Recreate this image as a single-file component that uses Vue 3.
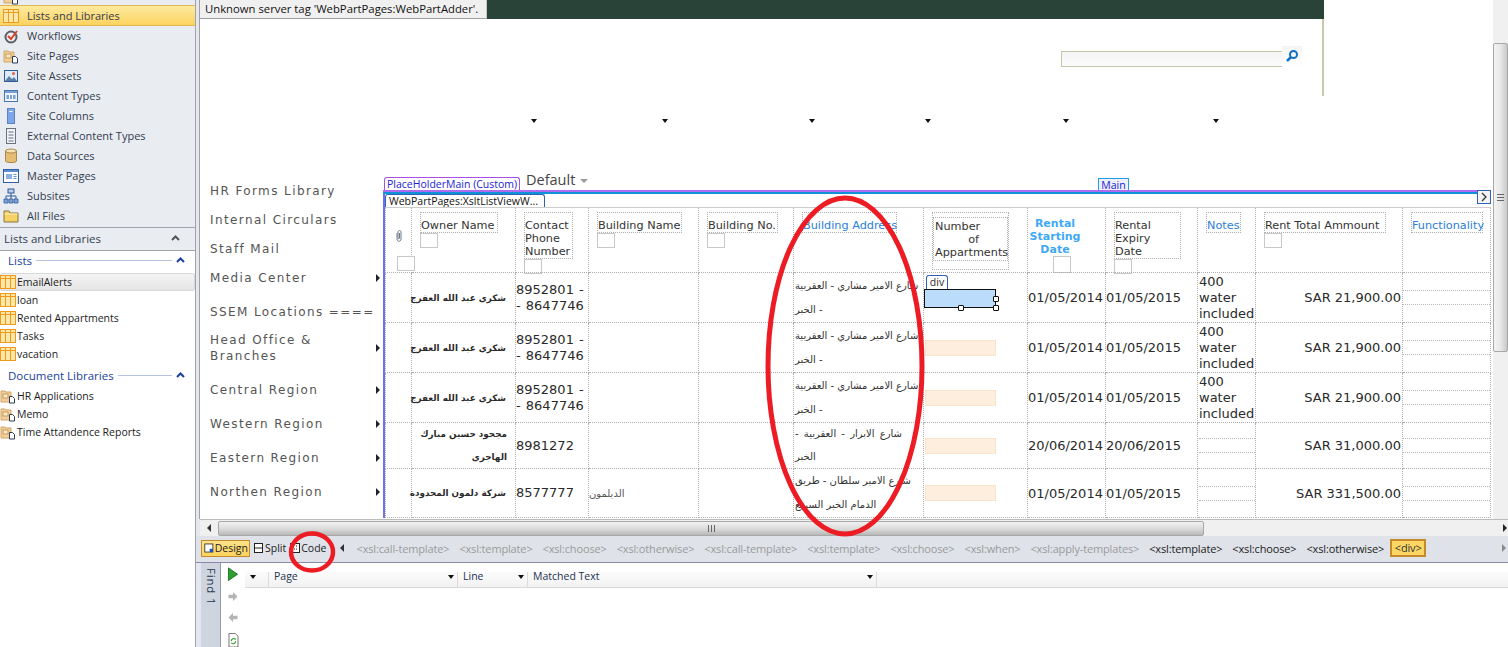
<template>
  <div class="app">
    <!-- icon sprite -->
    <svg class="sprite" width="0" height="0">
      <defs>
        <symbol id="ic-list" viewBox="0 0 16 16">
          <rect x="0.5" y="1.5" width="15" height="13" fill="#fde7a8" stroke="#ee9a1c" />
          <path d="M0.5 4.5h15M5.5 2v12M10.5 2v12" stroke="#ee9a1c" fill="none" />
        </symbol>
        <symbol id="ic-flow" viewBox="0 0 16 16">
          <circle cx="8" cy="9" r="5.5" fill="#eef0f2" stroke="#5a5f66" stroke-width="2" />
          <path d="M5 8l3 3 6-8" fill="none" stroke="#d8402a" stroke-width="2" />
        </symbol>
        <symbol id="ic-pages" viewBox="0 0 16 16">
          <path d="M1 3h4l1 1h5v10H1z" fill="#f1cf9a" stroke="#d2a566" />
          <rect x="3" y="6" width="5" height="4" fill="#fbeccd" stroke="#c99a58" />
          <path d="M9.500 8.500h3l2 2v4.500h-5z" fill="#fff" stroke="#2d3b55" />
        </symbol>
        <symbol id="ic-assets" viewBox="0 0 16 16">
          <rect x="1.500" y="2.500" width="13" height="11" fill="#dfeaf8" stroke="#2f5c99" />
          <path d="M2 13l4-5 3 3 2-2 3 4z" fill="#5c7fa8" />
          <circle cx="10.500" cy="5.500" r="1.500" fill="#e2603c" />
        </symbol>
        <symbol id="ic-ctype" viewBox="0 0 16 16">
          <rect x="1.500" y="2.500" width="13" height="11" fill="#eef4fb" stroke="#4a76ad" />
          <rect x="2" y="3" width="12" height="2" fill="#7aa0cf" />
          <path d="M3.500 7h9v4h-9z" fill="#7aa0cf" />
          <path d="M6.500 7v4M9.500 7v4" stroke="#fff" />
        </symbol>
        <symbol id="ic-column" viewBox="0 0 16 16">
          <rect x="4.500" y="0.500" width="7" height="15" fill="#7ea6ea" stroke="#5a83c8" />
          <path d="M6.500 3.500h3" stroke="#fff" />
        </symbol>
        <symbol id="ic-ext" viewBox="0 0 16 16">
          <rect x="3.500" y="0.500" width="9" height="15" fill="#f1f3f6" stroke="#68717f" />
          <path d="M5.500 4h5M5.500 7h5M5.500 10h5M5.500 13h5" stroke="#68717f" />
        </symbol>
        <symbol id="ic-data" viewBox="0 0 16 16">
          <path d="M2.500 3v10c0 2 11 2 11 0V3z" fill="#e6bd74" stroke="#a9874e" />
          <ellipse cx="8" cy="3" rx="5.500" ry="2" fill="#f5e1b6" stroke="#a9874e" />
        </symbol>
        <symbol id="ic-master" viewBox="0 0 16 16">
          <rect x="0.500" y="1.500" width="15" height="13" fill="#fff" stroke="#2f5fa8" />
          <rect x="1" y="2" width="14" height="2" fill="#5d8cd0" />
          <rect x="3" y="6" width="6" height="5" fill="#8eb0e0" />
          <path d="M10.500 6.500h3M10.500 8.500h3M10.500 10.500h3" stroke="#5d8cd0" />
        </symbol>
        <symbol id="ic-sub" viewBox="0 0 16 16">
          <rect x="5" y="1" width="6" height="4" fill="#b9cdea" stroke="#2f5c99" />
          <path d="M8 5v3M3 11V8h10v3M8 8v3" fill="none" stroke="#2f5c99" />
          <path d="M1 11h4v4H1zM6 11h4v4H6zM11 11h4v4h-4z" fill="#7ea6d8" stroke="#2f5c99" stroke-width="0.800" />
        </symbol>
        <symbol id="ic-folder" viewBox="0 0 16 16">
          <path d="M1 3h5l1 2h8v9H1z" fill="#f6d163" stroke="#8a7440" />
          <path d="M1.500 6h13" stroke="#fff3c4" />
        </symbol>
        <symbol id="ic-chev" viewBox="0 0 9 6">
          <path d="M1 5l3.500-3.500L8 5" fill="none" stroke="currentColor" stroke-width="2" />
        </symbol>
      </defs>
    </svg>

    <!-- left nav -->
    <aside class="sidebar">
      <div class="nav-cut"><svg class="ic cut"><use href="#ic-pages" /></svg></div>
      <div v-for="item in siteObjects" :key="item.label" :class="['nav-row', { on: item.on }]">
        <svg class="ic"><use :href="'#' + item.icon" /></svg>
        <span>{{ item.label }}</span>
      </div>
      <div class="panel-head">
        <span>Lists and Libraries</span>
        <svg class="chev grey"><use href="#ic-chev" /></svg>
      </div>
      <div class="panel-body">
        <div class="group-head">
          <span>Lists</span><i></i><svg class="chev"><use href="#ic-chev" /></svg>
        </div>
        <div v-for="(l, i) in lists" :key="l" :class="['lib-row', { hover: i === 0 }]">
          <svg class="ic"><use href="#ic-list" /></svg>
          <span>{{ l }}</span>
        </div>
        <div class="group-head second">
          <span>Document Libraries</span><i></i><svg class="chev"><use href="#ic-chev" /></svg>
        </div>
        <div v-for="l in libraries" :key="l" class="lib-row">
          <svg class="ic"><use href="#ic-pages" /></svg>
          <span>{{ l }}</span>
        </div>
      </div>
    </aside>

    <main class="main">
      <div class="canvas-row">
        <div class="design">
          <div class="top-bar">
            <div class="tag-error">Unknown server tag 'WebPartPages:WebPartAdder'.</div>
            <div class="green"></div>
            <div class="top-blank"></div>
          </div>

          <div class="head-wrap">
            <div class="head-area">
              <div class="search">
                <div class="search-input"></div>
                <div class="search-btn">
                  <svg width="14" height="14" viewBox="0 0 14 14">
                    <circle cx="8.500" cy="5.500" r="3.500" fill="none" stroke="#0f72c4" stroke-width="2" />
                    <path d="M6 8l-4 4" stroke="#0f72c4" stroke-width="2.500" />
                  </svg>
                </div>
              </div>
            </div>
          </div>

          <div class="arrows">
            <span v-for="w in arrowGaps" :key="w" class="arrow-slot" :style="{ width: w + 'px' }"><i class="tri"></i></span>
          </div>

          <div class="body-row">
            <ul class="page-nav">
              <li v-for="n in pageNav" :key="n.label" :class="n.cls">
                <span>{{ n.label }}</span>
                <i v-if="n.sub" class="tri-right"></i>
              </li>
            </ul>

            <div class="placeholder">
              <div class="ph-tabs">
                <span class="ph-tab">PlaceHolderMain (Custom)</span>
                <span class="ph-default">Default <i class="tri-grey"></i></span>
                <span class="main-tab">Main</span>
              </div>
              <div class="ph-lines">
                <button class="ph-more">
                  <svg width="8" height="10" viewBox="0 0 8 10"><path d="M2 1l4 4-4 4" fill="none" stroke="#333" stroke-width="1.300" /></svg>
                </button>
              </div>
              <div class="ph-inner">
                <div class="wp-tab">WebPartPages:XsltListViewW...</div>
                <table class="grid">
                  <colgroup>
                    <col v-for="w in colWidths" :key="w.k" :style="{ width: w.v + 'px' }" />
                  </colgroup>
                  <thead>
                    <tr>
                      <th class="clip-cell">
                        <svg width="8" height="12" viewBox="0 0 8 12"><path d="M2 3v6c0 3 4 3 4 0V2C6 0 3 0 3 2v6c0 1 1.500 1 1.500 0V3" fill="none" stroke="#6e7a88" /></svg>
                        <div class="fb clip-fb"></div>
                      </th>
                      <th><div class="lbl w78">Owner Name</div><div class="fb"></div></th>
                      <th><div class="lbl w49">Contact Phone Number</div><div class="fb"></div></th>
                      <th><div class="lbl w85">Building Name</div><div class="fb"></div></th>
                      <th><div class="lbl w71">Building No.</div><div class="fb"></div></th>
                      <th><div class="lbl blue w95">Building Address</div></th>
                      <th>
                        <div class="lbl outer">
                          <div class="appt">Number<span class="of">of</span>Appartments</div>
                        </div>
                      </th>
                      <th class="start">
                        <div class="start-lbl">Rental Starting Date</div>
                        <div class="fb start-fb"></div>
                      </th>
                      <th><div class="lbl w67">Rental<br />Expiry<br />Date</div><div class="fb"></div></th>
                      <th><div class="lbl blue w35">Notes</div></th>
                      <th><div class="lbl w122">Rent Total Ammount</div><div class="fb"></div></th>
                      <th><div class="lbl blue w72">Functionality</div></th>
                    </tr>
                  </thead>
                  <tbody>
                    <tr v-for="(r, i) in rows" :key="i" :class="'h' + r.h">
                      <td></td>
                      <td class="owner">{{ r.owner }}</td>
                      <td class="phone">{{ r.phone }}</td>
                      <td class="bname">{{ r.building }}</td>
                      <td></td>
                      <td class="addr">{{ r.address }}</td>
                      <td class="appt-cell">
                        <div v-if="i === 0" class="sel-wrap">
                          <span class="div-tag">div</span>
                          <div class="sel-box">
                            <i class="hd h1"></i><i class="hd h2"></i><i class="hd h3"></i>
                          </div>
                        </div>
                        <div v-else class="peach"></div>
                      </td>
                      <td class="num">{{ r.start }}</td>
                      <td class="num">{{ r.end }}</td>
                      <td class="notes">
                        <template v-if="r.notes">400 water included</template>
                        <div v-else class="dot-box"></div>
                      </td>
                      <td class="price">{{ r.price }}</td>
                      <td><div class="dot-box"></div></td>
                    </tr>
                  </tbody>
                </table>
              </div>
            </div>
          </div>
        </div>

        <div class="vscroll">
          <div class="vthumb"><span class="grip-h"></span></div>
        </div>
      </div>

      <div class="hscroll">
        <i class="tri-left"></i>
        <div class="hthumb"><span class="grip-v"></span></div>
        <i class="tri-right small"></i>
      </div>

      <div class="crumbs">
        <div class="view-btn active">
          <svg width="12" height="12" viewBox="0 0 12 12"><rect x="1" y="1" width="10" height="10" fill="#fff" stroke="#222" /><rect x="7" y="7" width="4" height="4" fill="#1b52c4" /></svg>
          Design
        </div>
        <div class="view-btn">
          <svg width="11" height="12" viewBox="0 0 11 12"><rect x="1.500" y="1.500" width="8" height="9" fill="#fff" stroke="#222" /><path d="M1.500 6h8" stroke="#222" /></svg>
          Split
        </div>
        <div class="view-btn code">
          <svg width="10" height="10" viewBox="0 0 10 10"><rect x="0.500" y="0.500" width="9" height="9" fill="#fff" stroke="#222" /><path d="M3 3h1M6 3h1M4 6h1M6 6h1" stroke="#222" /></svg>
          Code
        </div>
        <i class="tri-left dark"></i>
        <div class="tags">
          <span v-for="(t, i) in crumbs" :key="i" :class="['tag', t.cls]">{{ t.label }}</span>
        </div>
        <i class="tri-right small grey-tri"></i>
      </div>

      <div class="find-pane">
        <div class="find-tab"><span>Find 1</span></div>
        <div class="find-tools">
          <svg width="12" height="16" viewBox="0 0 12 16"><path d="M1 1l10 7-10 7z" fill="#2fa02f" stroke="#17701a" /></svg>
          <svg width="12" height="10" viewBox="0 0 12 10"><path d="M1 3h5V0l5 5-5 5V7H1z" fill="#b5b5b5" /></svg>
          <svg width="12" height="10" viewBox="0 0 12 10"><path d="M11 3H6V0L1 5l5 5V7h5z" fill="#b5b5b5" /></svg>
          <svg width="13" height="16" viewBox="0 0 13 16"><path d="M1.500 0.500h7l3 3v12h-10z" fill="#fff" stroke="#666" /><path d="M4 9a3 3 0 0 1 5-2M9 9a3 3 0 0 1-5 2" fill="none" stroke="#2fa02f" stroke-width="1.200" /></svg>
        </div>
        <div class="find-main">
          <div class="find-head">
            <div class="fh f0"><i class="tri"></i></div>
            <div class="fh f1">Page<i class="tri"></i></div>
            <div class="fh f2">Line<i class="tri"></i></div>
            <div class="fh f3">Matched Text<i class="tri"></i></div>
          </div>
        </div>
      </div>
    </main>

    <!-- red marks drawn over the screenshot -->
    <svg class="marks" width="1508" height="647" viewBox="0 0 1508 647">
      <ellipse cx="845" cy="366" rx="77" ry="168" fill="none" stroke="#ed1c24" stroke-width="5" />
      <ellipse cx="312" cy="552" rx="21" ry="18.500" fill="none" stroke="#ed1c24" stroke-width="4.500" />
    </svg>
  </div>
</template>

<script setup>
const siteObjects = [
  { label: 'Lists and Libraries', icon: 'ic-list', on: true },
  { label: 'Workflows', icon: 'ic-flow' },
  { label: 'Site Pages', icon: 'ic-pages' },
  { label: 'Site Assets', icon: 'ic-assets' },
  { label: 'Content Types', icon: 'ic-ctype' },
  { label: 'Site Columns', icon: 'ic-column' },
  { label: 'External Content Types', icon: 'ic-ext' },
  { label: 'Data Sources', icon: 'ic-data' },
  { label: 'Master Pages', icon: 'ic-master' },
  { label: 'Subsites', icon: 'ic-sub' },
  { label: 'All Files', icon: 'ic-folder' }
]

const lists = ['EmailAlerts', 'loan', 'Rented Appartments', 'Tasks', 'vacation']
const libraries = ['HR Applications', 'Memo', 'Time Attandence Reports']

const arrowGaps = [337, 131, 147, 116, 138, 150]

const pageNav = [
  { label: 'HR Forms Library', cls: 'short' },
  { label: 'Internal Circulars', cls: 'short' },
  { label: 'Staff Mail', cls: 'short' },
  { label: 'Media Center', cls: 'short', sub: true },
  { label: 'SSEM Locations ====', cls: 'ssem' },
  { label: 'Head Office & Branches', cls: 'head', sub: true },
  { label: 'Central Region', sub: true },
  { label: 'Western Region', sub: true },
  { label: 'Eastern Region', sub: true },
  { label: 'Northen Region', sub: true }
]

const colWidths = [26, 104, 73, 110, 95, 130, 104, 78, 92, 58, 147, 88].map((v, k) => ({ k, v }))

const ADDR_1 = 'شارع الامير مشاري - العقربية - الخبر'
const OWNER_1 = 'شكري عبد الله العفرج'

const rows = [
  { h: 50, owner: OWNER_1, phone: '8952801 - - 8647746', building: '', address: ADDR_1, start: '01/05/2014', end: '01/05/2015', notes: true, price: 'SAR 21,900.00' },
  { h: 50, owner: OWNER_1, phone: '8952801 - - 8647746', building: '', address: ADDR_1, start: '01/05/2014', end: '01/05/2015', notes: true, price: 'SAR 21,900.00' },
  { h: 50, owner: OWNER_1, phone: '8952801 - - 8647746', building: '', address: ADDR_1, start: '01/05/2014', end: '01/05/2015', notes: true, price: 'SAR 21,900.00' },
  { h: 46, owner: 'مجحود حسين مبارك الهاجري', phone: '8981272', building: '', address: 'شارع الابرار - العقربية - الخبر', start: '20/06/2014', end: '20/06/2015', notes: false, price: 'SAR 31,000.00' },
  { h: 48, owner: 'شركة دلمون المحدودة', phone: '8577777', building: 'الديلمون', address: 'شارع الامير سلطان - طريق الدمام الخبر السريع', start: '01/05/2014', end: '01/05/2015', notes: false, price: 'SAR 331,500.00' }
]

const crumbs = [
  { label: '<xsl:call-template>' },
  { label: '<xsl:template>' },
  { label: '<xsl:choose>' },
  { label: '<xsl:otherwise>' },
  { label: '<xsl:call-template>' },
  { label: '<xsl:template>' },
  { label: '<xsl:choose>' },
  { label: '<xsl:when>' },
  { label: '<xsl:apply-templates>' },
  { label: '<xsl:template>', cls: 'dark' },
  { label: '<xsl:choose>', cls: 'dark' },
  { label: '<xsl:otherwise>', cls: 'dark' },
  { label: '<div>', cls: 'cur' }
]
</script>

<style>
html, body { margin: 0; padding: 0; overflow: hidden; background: #fff; }
</style>

<style scoped>
.app {
  position: relative;
  display: flex;
  width: 1508px;
  height: 647px;
  overflow: hidden;
  font-family: "Open Sans", "Noto Sans", sans-serif;
  font-size: 11px;
  color: #222;
  background: #fff;
}
.sprite { position: absolute; }
.marks { position: absolute; left: 0; top: 0; pointer-events: none; }
.ic { width: 16px; height: 16px; flex: none; }

/* sidebar */
.sidebar {
  width: 195px;
  flex: none;
  display: flex;
  flex-direction: column;
  background: #e9edf2;
  border-right: 1px solid #a0a4aa;
  color: #333c4e;
}
.nav-cut { height: 6px; overflow: hidden; position: relative; border-bottom: 1px solid #e3b64c; box-sizing: border-box; }
.nav-cut .cut { position: absolute; left: 3px; top: -11px; }
.nav-row {
  height: 20px;
  display: flex;
  align-items: center;
  gap: 8px;
  padding: 0 0 1px 3px;
  box-sizing: border-box;
}
.nav-row.on {
  background: linear-gradient(#fdeaa0, #fdd35f);
  border-bottom: 1px solid #e3b64c;
  padding-bottom: 0;
}
.panel-head {
  margin-top: 1px;
  height: 24px;
  display: flex;
  align-items: center;
  justify-content: space-between;
  padding: 0 15px 2px 4px;
  box-sizing: border-box;
  border-top: 1px solid #a0a4aa;
  border-bottom: 1px solid #a0a4aa;
  font-size: 11.500px;
}
.panel-body { flex: 1; background: #fff; padding-top: 1px; }
.group-head {
  height: 21px;
  display: flex;
  align-items: center;
  gap: 4px;
  padding: 0 10px 5px 8px;
  box-sizing: border-box;
  color: #1b3f9c;
  font-size: 11.500px;
}
.group-head i { flex: 1; height: 1px; background: #b4c4e4; }
.group-head.second { height: 24px; padding: 2px 10px 2px 8px; }
.chev { width: 9px; height: 6px; flex: none; color: #1b3f9c; }
.chev.grey { color: #555; }
.lib-row {
  height: 18px;
  display: flex;
  align-items: center;
  gap: 1px;
  color: #1c1c1c;
  box-sizing: border-box;
  font-size: 10.500px;
}
.lib-row.hover {
  background: linear-gradient(#f5f5f5, #e4e4e4);
  border-radius: 3px;
  box-shadow: inset 0 0 0 1px #d8d8d8;
}

/* main */
.main { flex: 1; min-width: 0; display: flex; flex-direction: column; background: #e4e8ee; }
.canvas-row { height: 519px; display: flex; padding-left: 3px; box-sizing: border-box; flex: none; }
.design {
  flex: 1;
  min-width: 0;
  background: #fff;
  border-left: 1px solid #a0a0a0;
  display: flex;
  flex-direction: column;
}
.top-bar { height: 19px; display: flex; flex: none; }
.tag-error {
  width: 287px;
  background: #f0f0f0;
  border-bottom: 1px solid #a0a0a0;
  border-right: 1px solid #c8c8c8;
  box-sizing: border-box;
  padding-left: 5px;
  line-height: 17px;
  font-size: 11.300px;
  color: #111;
}
.green { width: 837px; background: #2a4339; }
.top-blank { flex: 1; }
.head-wrap { height: 77px; flex: none; }
.head-area {
  width: 1124px;
  height: 77px;
  border-right: 2px solid #c8c8ad;
  position: relative;
  display: flex;
  justify-content: flex-end;
  padding-top: 28px;
  box-sizing: border-box;
}
.search { display: flex; align-items: flex-end; height: 20px; margin-right: 20px; }
.search-input {
  width: 221px;
  height: 16px;
  box-sizing: border-box;
  border: 1px solid #c6c6a8;
  border-right: none;
  background: linear-gradient(#f4f4f4, #fbfbfb);
}
.search-btn {
  width: 20px;
  height: 21px;
  background: linear-gradient(#f4f4f4, #fff);
  display: flex;
  justify-content: center;
  padding-top: 3px;
  box-sizing: border-box;
}

.arrows { height: 80px; display: flex; flex: none; padding-top: 23px; box-sizing: border-box; }
.arrow-slot { display: flex; justify-content: flex-end; height: 6px; }

.tri { display: inline-block; width: 0; height: 0; border-left: 3.500px solid transparent; border-right: 3.500px solid transparent; border-top: 4px solid #111; }
.tri-right { display: inline-block; width: 0; height: 0; border-top: 4px solid transparent; border-bottom: 4px solid transparent; border-left: 4px solid #222; }
.tri-left { display: inline-block; width: 0; height: 0; border-top: 4px solid transparent; border-bottom: 4px solid transparent; border-right: 4px solid #333; }
.tri-grey { display: inline-block; width: 0; height: 0; border-left: 4px solid transparent; border-right: 4px solid transparent; border-top: 4px solid #999; vertical-align: middle; margin-left: 1px; }
.grey-tri { border-left-color: #888; }

.body-row { flex: 1; min-height: 0; display: flex; }
.page-nav {
  width: 183px;
  flex: none;
  margin: 0;
  padding: 0 0 0 10px;
  box-sizing: border-box;
  list-style: none;
  font-family: "DejaVu Sans", sans-serif;
  font-size: 12px;
  letter-spacing: 1.400px;
  line-height: 16px;
  color: #555;
}
.page-nav li { height: 34px; display: flex; align-items: center; justify-content: space-between; padding-right: 3px; box-sizing: border-box; }
.page-nav li.short { height: 29px; }
.page-nav li.ssem { height: 38px; padding-top: 1px; }
.page-nav li.head { height: 36px; margin-bottom: 7px; }
.page-nav li span { max-width: 168px; }
.page-nav li.ssem span { white-space: nowrap; }
.page-nav li.head span { max-width: 120px; }

.placeholder { flex: 1; min-width: 0; display: flex; flex-direction: column; margin-bottom: 1px; }
.ph-tabs { height: 14px; position: relative; display: flex; align-items: flex-end; padding-left: 1px; }
.ph-tab {
  height: 13px;
  box-sizing: border-box;
  border: 1px solid #a94fe8;
  border-bottom: none;
  border-radius: 3px 3px 0 0;
  padding: 0 2px;
  line-height: 12px;
  color: #2222d8;
  font-size: 10.500px;
  background: #fff;
  width: 136px;
  white-space: nowrap;
  overflow: hidden;
}
.ph-default { margin-left: 6px; font-size: 14.500px; color: #444; line-height: 14px; height: 16px; margin-bottom: 1px; }
.main-tab {
  position: absolute;
  left: 715px;
  top: 2px;
  height: 12px;
  width: 31px;
  box-sizing: border-box;
  border: 1px solid #1e9de8;
  border-bottom: none;
  text-align: center;
  line-height: 12px;
  font-size: 10.500px;
  color: #2222d8;
  background: #eef0fa;
}
.ph-lines {
  height: 0;
  width: 1094px;
  position: relative;
  border-top: 2px solid #b06cf0;
  border-bottom: 2px solid #0e92d8;
}
.ph-more {
  position: absolute;
  left: 1094px;
  top: -2px;
  width: 14px;
  height: 14px;
  padding: 0;
  background: #f3f3f5;
  border: 1px solid #2f62b8;
  display: flex;
  align-items: center;
  justify-content: center;
}
.ph-inner { flex: 1; min-height: 0; border-left: 2px solid #7070f0; position: relative; overflow: hidden; }
.wp-tab {
  width: 160px;
  height: 13px;
  box-sizing: border-box;
  border: 1px solid #2f62b8;
  border-bottom: none;
  border-radius: 3px 3px 0 0;
  line-height: 12px;
  padding-left: 3px;
  font-size: 10.500px;
  color: #111;
  white-space: nowrap;
  overflow: hidden;
}

/* list view table */
.grid {
  table-layout: fixed;
  border-collapse: collapse;
  width: 1105px;
  border-top: 1px dotted #3a6ec8;
  font-family: "DejaVu Sans", sans-serif;
  font-size: 13px;
  color: #2a2a2a;
}
.grid thead tr { height: 65px; border-top: 1px solid #ccc; }
.grid th {
  vertical-align: top;
  text-align: left;
  font-weight: normal;
  font-size: 11.250px;
  line-height: 13px;
  padding: 4px 8px 0;
  border: 1px dotted #b0b0b0;
  border-top: none;
  color: #333;
  overflow: visible;
}
.grid td {
  padding: 0;
  border: 1px dotted #b0b0b0;
  vertical-align: middle;
  overflow: visible;
}
.h50 { height: 50px; }
.h46 { height: 46px; }
.h48 { height: 48px; }
.lbl { border: 1px dotted #b0b0b0; padding: 6px 0 0; box-sizing: border-box; white-space: normal; }
.blue { color: #2a7ed6; white-space: nowrap; }
.w78 { width: 78px; white-space: nowrap; }
.w49 { width: 49px; }
.w85 { width: 85px; white-space: nowrap; }
.w71 { width: 71px; white-space: nowrap; }
.w95 { width: 95px; }
.w67 { width: 67px; }
.w35 { width: 35px; }
.w122 { width: 122px; white-space: nowrap; }
.w72 { width: 72px; }
.fb { width: 18px; height: 15px; margin-bottom: -4px; border: 1px solid #c8c8c8; box-sizing: border-box; background: #fff; }
.clip-cell { position: relative; padding: 0 !important; }
.clip-cell svg { position: absolute; left: 9px; top: 22px; }
.clip-fb { position: absolute; left: 11px; top: 48px; }
.outer { width: 77px; height: 58px; padding: 4px 0 0; }
.appt { border: 1px dotted #b0b0b0; padding: 2px 0 0 1px; height: 44px; box-sizing: border-box; }
.of { display: block; text-align: right; padding-right: 28px; height: 13px; }
.start { text-align: left !important; padding: 3px 0 0 !important; }
.start-lbl { font-weight: bold; color: #3fa9f5; font-size: 11px; width: 54px; margin: 6px 0 0; text-align: center; line-height: 13px; }
.start-fb { margin: 0 0 -4px 25px; height: 17px; }
.owner { direction: rtl; text-align: right; padding-right: 9px !important; font-size: 8.800px; font-weight: bold; line-height: 24px; white-space: nowrap; }
.h46 .owner { white-space: normal; padding-right: 8px !important; }
.phone { line-height: 16px; word-spacing: 1px; }
.bname { font-size: 10px; color: #555; }
.addr { font-size: 10px; line-height: 24px; color: #333; padding: 0 1px !important; }
.h46 .owner, .h46 .addr { line-height: 22.500px; }
.h46 .addr { padding-right: 14px !important; word-spacing: 2px; }
.appt-cell { position: relative; }
.peach { width: 71px; height: 16px; margin-left: 1px; background: #feeedd; border: 1px dotted #f3d8bb; box-sizing: border-box; }
.sel-wrap { position: relative; height: 18px; }
.sel-box { position: absolute; left: 0; top: 0; width: 72px; height: 19px; box-sizing: border-box; background: #bcdcfc; border: 1px solid #111; }
.div-tag {
  position: absolute;
  left: 2px;
  top: -14px;
  width: 22px;
  height: 14px;
  box-sizing: border-box;
  border: 1px solid #2f62b8;
  border-bottom: none;
  border-radius: 3px 3px 0 0;
  text-align: center;
  font-family: "Open Sans", sans-serif;
  font-size: 10.500px;
  line-height: 13px;
  background: #fff;
}
.hd { position: absolute; width: 6px; height: 6px; background: #fff; border: 1px solid #111; box-sizing: border-box; border-radius: 1px; }
.h1 { right: -4px; top: 6px; }
.h2 { right: -4px; bottom: -4px; }
.h3 { left: 33px; bottom: -4px; }
.num { white-space: nowrap; }
.notes { line-height: 16px; padding-left: 1px !important; }
.price { text-align: right; padding-right: 1px !important; white-space: nowrap; }
.dot-box { height: 13px; border-top: 1px dotted #b8b8b8; border-bottom: 1px dotted #b8b8b8; }

/* scrollbars */
.vscroll { width: 15px; flex: none; background: #f0f0f0; padding-top: 43px; box-sizing: border-box; }
.vthumb {
  height: 309px;
  box-sizing: border-box;
  border: 1px solid #a8a8a8;
  border-radius: 2px;
  background: linear-gradient(90deg, #f3f3f3, #e8e8e8 50%, #c8c8c8);
  display: flex;
  align-items: center;
  justify-content: center;
}
.grip-h { width: 7px; height: 7px; background: repeating-linear-gradient(#666 0 1px, transparent 1px 3px); }
.hscroll { height: 17px; flex: none; display: flex; align-items: center; background: #f0f0f0; border-top: 1px solid #bbb; box-sizing: border-box; margin-left: 4px; padding-left: 7px; }
.hthumb {
  width: 986px;
  height: 15px;
  margin-left: 7px;
  box-sizing: border-box;
  border: 1px solid #a8a8a8;
  border-radius: 2px;
  background: linear-gradient(#f0f0f0, #dcdcdc 50%, #b8b8b8);
  display: flex;
  align-items: center;
  justify-content: center;
}
.grip-v { width: 7px; height: 7px; background: repeating-linear-gradient(90deg, #666 0 1px, transparent 1px 3px); }
.hscroll .tri-right { margin-left: auto; margin-right: 1px; }

/* crumb bar */
.crumbs {
  height: 27px;
  flex: none;
  display: flex;
  align-items: center;
  padding: 0 0 2px 5px;
  box-sizing: border-box;
  background: #dfe3e9;
  border-bottom: 1px solid #8a8aa8;
  font-size: 10.500px;
}
.view-btn { height: 17px; display: flex; align-items: center; gap: 1px; box-sizing: border-box; padding: 0 1px 0 2px; color: #222; }
.view-btn.active { width: 49px; background: linear-gradient(#fde28a, #fdd35f); border: 1px solid #c58a2b; margin-right: 1px; }
.view-btn.code { margin-left: 1px; margin-right: 12px; }
.tri-left.dark { border-right-color: #333; margin-right: 13px; }
.tags { display: flex; align-items: center; gap: 10px; flex: 1; font-size: 11px; letter-spacing: -0.150px; }
.tag { color: #9a9a9a; white-space: nowrap; }
.tag.dark { color: #222; }
.tag.cur { width: 36px; height: 18px; margin-left: -4px; box-sizing: border-box; border: 2px solid #c58a2b; background: #fdd663; color: #333; text-align: center; line-height: 14px; }
.crumbs > .tri-right { margin-right: 2px; }

/* find results */
.find-pane { flex: 1; min-height: 0; display: flex; margin-left: 5px; background: #fff; }
.find-tab { width: 19px; flex: none; background: #ced5de; border-right: 1px solid #8f9cad; position: relative; }
.find-tab span { position: absolute; left: 3px; top: 5px; writing-mode: vertical-rl; font-size: 11.500px; color: #1c3250; letter-spacing: 0.800px; }
.find-tools { width: 24px; flex: none; display: flex; flex-direction: column; align-items: center; gap: 11px; padding-top: 4px; box-sizing: border-box; }
.find-main { flex: 1; min-width: 0; padding-top: 9px; }
.find-head { height: 15px; display: flex; background: linear-gradient(#fbfbfb, #f2f2f2); border-bottom: 1px solid #d8d8d8; font-size: 10.500px; color: #1c3250; }
.fh { display: flex; align-items: center; justify-content: space-between; padding: 0 3px 6px 5px; box-sizing: border-box; border-right: 1px solid #dcdcdc; height: 15px; overflow: visible; line-height: 9px; }
.f0 { width: 24px; }
.f1 { width: 189px; }
.f2 { width: 70px; }
.f3 { width: 349px; }
</style>
